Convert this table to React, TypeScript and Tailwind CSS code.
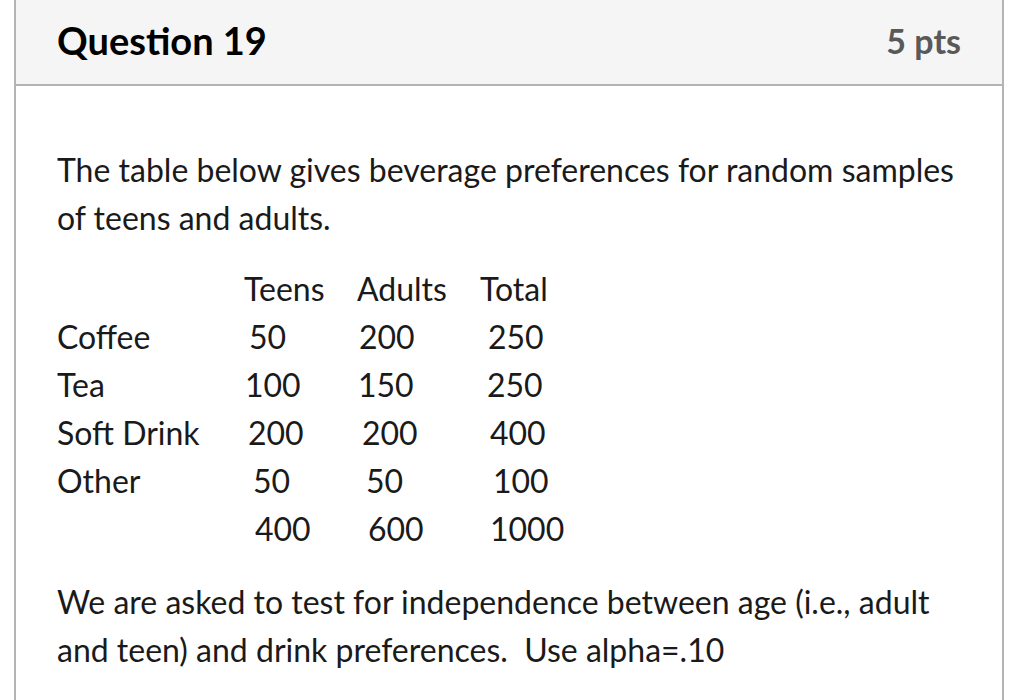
const rows: { label: string; cells: [string, number][] }[] = [
  { label: "Coffee", cells: [["50", 5], ["200", 2], ["250", 6]] },
  { label: "Tea", cells: [["100", 1], ["150", 1], ["250", 5]] },
  { label: "Soft Drink", cells: [["200", 4], ["200", 5], ["400", 8]] },
  { label: "Other", cells: [["50", 9], ["50", 9], ["100", 11]] },
  { label: "", cells: [["400", 11], ["600", 11], ["1000", 8]] },
];

function Row({ label, cells }: { label: string; cells: [string, number][] }) {
  return (
    <div className="flex h-[48px] items-center">
      <div className="w-[187px]">{label}</div>
      <div className="w-[113px]" style={{ paddingLeft: cells[0][1] }}>
        {cells[0][0]}
      </div>
      <div className="w-[125px]" style={{ paddingLeft: cells[1][1] }}>
        {cells[1][0]}
      </div>
      <div style={{ paddingLeft: cells[2][1] }}>{cells[2][0]}</div>
    </div>
  );
}

export default function App() {
  return (
    <div className="h-[700px] w-[1026px] overflow-hidden bg-white font-['Lato',sans-serif] text-[#1a1a1a]">
      <div className="ml-[14px] mr-[22px] border-x-2 border-[#b4b4b4]">
        <div className="flex h-[86px] items-center justify-between border-b-2 border-[#b4b4b4] bg-[#f5f5f5] pb-[4px] pl-[41px] pr-[41px]">
          <h2 className="text-[38px] font-bold text-black">Question 19</h2>
          <span className="text-[34px] font-bold text-[#595959]">5 pts</span>
        </div>
        <div className="px-[41px] pt-[60px] pb-10 text-[32px] leading-[48px]">
          <p>
            The table below gives beverage preferences for random samples of teens and adults.
          </p>
          <div className="mt-[23px]">
            <div className="flex h-[48px] items-center">
              <div className="w-[187px]" />
              <div className="w-[113px]">Teens</div>
              <div className="w-[125px]">Adults</div>
              <div className="-ml-[2px]">Total</div>
            </div>
            {rows.map((r, i) => (
              <Row key={i} label={r.label} cells={r.cells} />
            ))}
          </div>
          <p className="mt-[25px]">
            We are asked to test for independence between age (i.e., adult and teen) and drink
            preferences.&nbsp; Use alpha=.10
          </p>
        </div>
      </div>
    </div>
  );
}
